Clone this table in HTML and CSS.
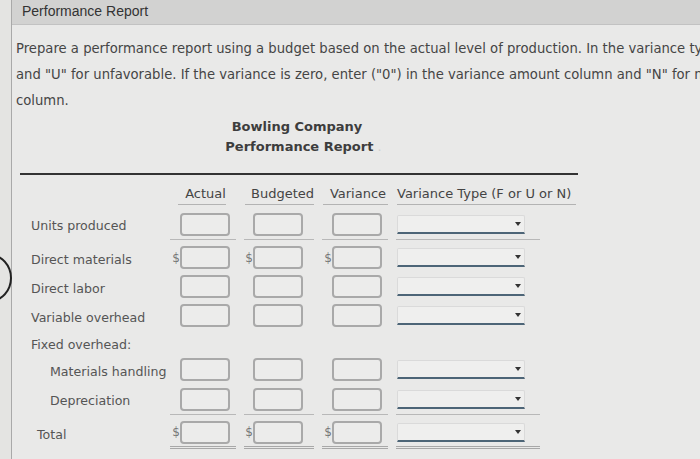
FILE: index.html
```html
<!DOCTYPE html>
<html>
<head>
<meta charset="utf-8">
<link rel="stylesheet" href="styles.css">
</head>
<body>
<div class="circle"></div>
<div class="panel">
  <div class="titlebar">Performance Report</div>
  <p class="intro">Prepare a performance report using a budget based on the actual level of production. In the variance type column, enter "F" for favorable<br>and "U" for unfavorable. If the variance is zero, enter ("0") in the variance amount column and "N" for no variance in the variance type<br>column.</p>
  <div class="report-title">
    <div>Bowling Company</div>
    <div>Performance Report<span class="dot"> .</span></div>
  </div>
  <div class="rule"></div>
  <div class="grid">
    <div class="cell"></div>
    <div class="cell head"><span>Actual</span></div>
    <div class="cell head"><span>Budgeted</span></div>
    <div class="cell head"><span>Variance</span></div>
    <div class="cell head type"><span>Variance Type (F or U or N)</span></div>

    <div class="cell label">Units produced</div>
    <div class="cell num a line"><input class="box"></div>
    <div class="cell num b line"><input class="box"></div>
    <div class="cell num c line"><input class="box"></div>
    <div class="cell sel line"><div class="select"><span class="arrow"></span></div></div>

    <div class="cell label">Direct materials</div>
    <div class="cell num a"><span class="cur">$</span><input class="box"></div>
    <div class="cell num b"><span class="cur">$</span><input class="box"></div>
    <div class="cell num c"><span class="cur">$</span><input class="box"></div>
    <div class="cell sel"><div class="select"><span class="arrow"></span></div></div>

    <div class="cell label">Direct labor</div>
    <div class="cell num a"><input class="box"></div>
    <div class="cell num b"><input class="box"></div>
    <div class="cell num c"><input class="box"></div>
    <div class="cell sel"><div class="select"><span class="arrow"></span></div></div>

    <div class="cell label">Variable overhead</div>
    <div class="cell num a"><input class="box"></div>
    <div class="cell num b"><input class="box"></div>
    <div class="cell num c"><input class="box"></div>
    <div class="cell sel"><div class="select"><span class="arrow"></span></div></div>

    <div class="cell label short">Fixed overhead:</div>
    <div class="cell short"></div>
    <div class="cell short"></div>
    <div class="cell short"></div>
    <div class="cell short"></div>

    <div class="cell label indent">Materials handling</div>
    <div class="cell num a"><input class="box"></div>
    <div class="cell num b"><input class="box"></div>
    <div class="cell num c"><input class="box"></div>
    <div class="cell sel"><div class="select"><span class="arrow"></span></div></div>

    <div class="cell label indent">Depreciation</div>
    <div class="cell num a line"><input class="box"></div>
    <div class="cell num b line"><input class="box"></div>
    <div class="cell num c line"><input class="box"></div>
    <div class="cell sel line"><div class="select"><span class="arrow"></span></div></div>

    <div class="cell label total">Total</div>
    <div class="cell num a dbl"><span class="cur">$</span><input class="box"></div>
    <div class="cell num b dbl"><span class="cur">$</span><input class="box"></div>
    <div class="cell num c dbl"><span class="cur">$</span><input class="box"></div>
    <div class="cell sel dbl"><div class="select"><span class="arrow"></span></div></div>
  </div>
</div>
</body>
</html>
```

FILE: styles.css
```css
html, body {
  margin: 0;
  padding: 0;
}
body {
  width: 700px;
  height: 459px;
  overflow: hidden;
  background: #e4e4e2;
  font-family: "DejaVu Sans", Verdana, sans-serif;
  color: #4a4a4a;
  position: relative;
}
.circle {
  position: absolute;
  left: -32px;
  top: 254px;
  width: 40px;
  height: 44px;
  border: 2px solid #222;
  border-radius: 50%;
}
.panel {
  margin-left: 11px;
  border-left: 1px solid #a9a9a9;
  height: 459px;
  background: #e9e9e8;
}
.titlebar {
  height: 24px;
  line-height: 22px;
  background: #d2d2d1;
  border-bottom: 1px solid #c2c2c2;
  padding-left: 10px;
  font-family: "Liberation Sans", Arial, sans-serif;
  font-size: 14px;
  color: #333;
  white-space: nowrap;
}
.intro {
  margin: 0;
  padding: 11px 0 3px 4px;
  white-space: nowrap;
  overflow: hidden;
  font-size: 13.2px;
  line-height: 26px;
  color: #454545;
}
.report-title {
  width: 570px;
  text-align: center;
  font-weight: bold;
  font-size: 13px;
  line-height: 20px;
  color: #3d3d3d;
}
.report-title div:last-child { padding-left: 4px; }
.dot {
  color: #d0d0d0;
  font-weight: normal;
  margin-right: -9px;
}
.rule {
  margin: 16px 0 0 8px;
  width: 558px;
  height: 2px;
  background: #333;
}
.grid {
  display: grid;
  grid-template-columns: 142px 66px 70px 66px 180px;
  column-gap: 8px;
  margin-left: 8px;
  font-size: 13px;
}
.cell {
  box-sizing: border-box;
  display: flex;
  align-items: center;
  height: 29px;
}
.head {
  height: 30px;
  align-items: flex-end;
}
.head span {
  display: block;
  width: 100%;
  text-align: center;
  border-bottom: 1px solid #b3b3b3;
  padding-bottom: 3px;
  color: #444;
  white-space: nowrap;
}
.head:nth-child(2) span { margin: 0 10px 0 8px; padding-left: 7px; }
.head:nth-child(3) span { margin: 0 0 0 1px; padding-left: 6px; }
.head:nth-child(4) span { margin: 0 0 0 1px; padding-left: 5px; }
.head.type span { text-align: left; margin-left: 1px; }
.grid > .cell:nth-child(-n+5) { margin-bottom: 4px; }
.label {
  padding-left: 11px;
  color: #555;
  white-space: nowrap;
  padding-top: 4px;
  font-size: 12.6px;
}
.indent { padding-left: 30px; }
.total { padding-left: 17px; }
.short { height: 25px; }
.num {
  justify-content: flex-end;
  align-items: center;
}
.num.a { padding-right: 6px; }
.num.b { padding-right: 11px; }
.num.c { padding-right: 6px; }
.line { border-bottom: 1px solid #b8b8b8; height: 31px; margin-bottom: 3px; }
.dbl { border-bottom: 3px double #a8a8a8; height: 31px; }
.sel.line, .sel.dbl { margin-right: 36px; }
.cur {
  font-size: 12px;
  color: #777;
}
.box {
  box-sizing: border-box;
  width: 50px;
  height: 23px;
  margin: 0;
  padding: 0;
  border: 2px solid #a9a9a9;
  border-radius: 4px;
  background: #ececeb;
}
.select {
  box-sizing: border-box;
  position: relative;
  width: 128px;
  height: 19px;
  margin-left: 1px;
  border: 1px solid #dadada;
  border-bottom: 2px solid #4d6577;
  border-radius: 2px 2px 0 0;
  background: #efefee;
}
.arrow {
  position: absolute;
  right: 3px;
  top: 6px;
  width: 0;
  height: 0;
  border-left: 3.5px solid transparent;
  border-right: 3.5px solid transparent;
  border-top: 4px solid #333;
}
```
